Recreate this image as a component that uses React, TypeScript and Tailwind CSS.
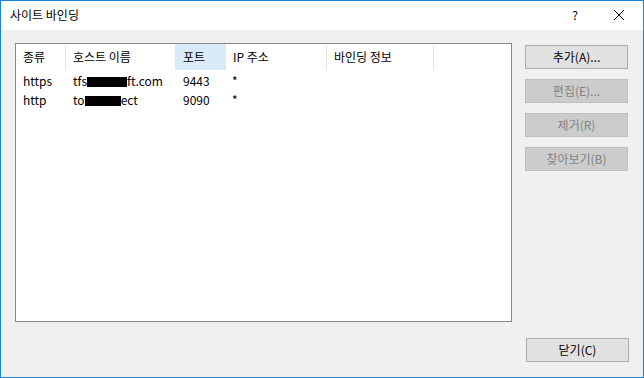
import React from 'react';

const font = { fontFamily: '"Noto Sans CJK KR", "Noto Sans", sans-serif' };

type Col = { label: string; width: string; active?: boolean };

const columns: Col[] = [
  { label: '종류', width: 'w-[50px]' },
  { label: '호스트 이름', width: 'w-[110px]' },
  { label: '포트', width: 'w-[50px]', active: true },
  { label: 'IP 주소', width: 'w-[101px]' },
  { label: '바인딩 정보', width: 'w-[107px]' },
];

const Redacted = ({ w }: { w: string }) => (
  <span className={`inline-block h-[10px] bg-black align-middle ${w}`} />
);

const rows = [
  {
    type: 'https',
    host: (
      <>
        tfs<Redacted w="w-[40px]" />ft.com
      </>
    ),
    port: '9443',
    ip: '*',
  },
  {
    type: 'http',
    host: (
      <>
        to<Redacted w="w-[36px]" />ect
      </>
    ),
    port: '9090',
    ip: '*',
  },
];

const Button = ({ label, disabled }: { label: string; disabled?: boolean }) => (
  <button
    className={`h-[24px] w-[103px] border text-[12px] leading-none ${
      disabled
        ? 'border-[#bfbfbf] bg-[#cccccc] text-[#838383]'
        : 'border-[#adadad] bg-[#e1e1e1] text-black'
    }`}
  >
    {label}
  </button>
);

export default function App() {
  return (
    <div
      style={font}
      className="flex h-[378px] w-[644px] flex-col border border-[#1883d7] bg-[#f0f0f0] text-[12px] text-black"
    >
      {/* Title bar */}
      <div className="flex h-[29px] items-center bg-white pl-[9px]">
        <span className="flex-1 pb-[2px]">사이트 바인딩</span>
        <span className="w-[20px] pb-[2px] text-center">?</span>
        <span className="ml-[24px] mr-[14px] flex w-[20px] justify-center pb-[2px]">
          <svg width="12" height="12" viewBox="0 0 12 12">
            <path d="M1 1L11 11M11 1L1 11" stroke="#000" strokeWidth="1" />
          </svg>
        </span>
      </div>

      {/* Body */}
      <div className="flex flex-1 px-[14px] pt-[13px]">
        <div className="h-[279px] w-[497px] border border-[#828790] bg-white">
          <div className="flex h-[26px]">
            {columns.map((c) => (
              <div
                key={c.label}
                className={`flex items-center border-r border-[#e5e5e5] pl-[7px] ${c.width} ${
                  c.active ? 'bg-[#d9ebf9]' : ''
                }`}
              >
                {c.label}
              </div>
            ))}
          </div>
          <div className="pt-[1px]">
            {rows.map((r) => (
              <div key={r.type} className="flex h-[19px] items-center">
                <div className="w-[50px] pl-[7px]">{r.type}</div>
                <div className="w-[110px] whitespace-nowrap pl-[7px]">{r.host}</div>
                <div className="w-[50px] pl-[7px]">{r.port}</div>
                <div className="w-[101px] pl-[6px]">{r.ip}</div>
              </div>
            ))}
          </div>
        </div>

        <div className="ml-[13px] flex flex-col gap-[10px] pt-[2px]">
          <Button label="추가(A)..." />
          <Button label="편집(E)..." disabled />
          <Button label="제거(R)" disabled />
          <Button label="찾아보기(B)" disabled />
        </div>
      </div>

      {/* Footer */}
      <div className="flex justify-end pb-[15px] pr-[14px]">
        <Button label="닫기(C)" />
      </div>
    </div>
  );
}
